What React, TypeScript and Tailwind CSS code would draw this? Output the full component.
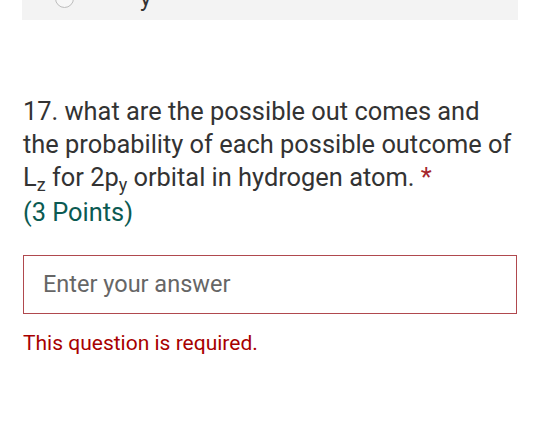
export default function App() {
  return (
    <div className="w-[540px] h-[432px] bg-white overflow-hidden" style={{ fontFamily: "Roboto, 'Noto Sans', sans-serif" }}>
      <div className="mx-[22px] h-[20px] bg-[#f3f3f3] overflow-hidden flex items-end pl-[33px] gap-[66px] pb-[14px]">
        <div className="shrink-0 w-[19px] h-[19px] rounded-full border border-[#bdbdbd] bg-[#f7f7f7] mb-[-2px]" />
        <div className="text-[24px] leading-[28px] text-[#333] mb-[-6px]">y</div>
      </div>
      <div className="px-[23px] pt-[75px] flex flex-col">
        <div className="text-[25.4px] leading-[33px] text-[#333] whitespace-nowrap">
          17. what are the possible out comes and<br />
          the probability of each possible outcome of<br />
          L<span className="relative top-[5px] text-[18px]">z</span> for 2p<span className="relative top-[5px] text-[18px]">y</span> orbital in hydrogen atom. <span className="text-[#a4262c]">*</span>
        </div>
        <div className="text-[25.4px] leading-[33px] text-[#0b5a52]">(3 Points)</div>
        <div className="mt-[26px] h-[59px] border border-[#b0494e] flex items-center px-[19px]">
          <span className="text-[23.5px] text-[#666]">Enter your answer</span>
        </div>
        <div className="mt-[15px] text-[21px] leading-[28px] text-[#a80000]">This question is required.</div>
      </div>
    </div>
  );
}
